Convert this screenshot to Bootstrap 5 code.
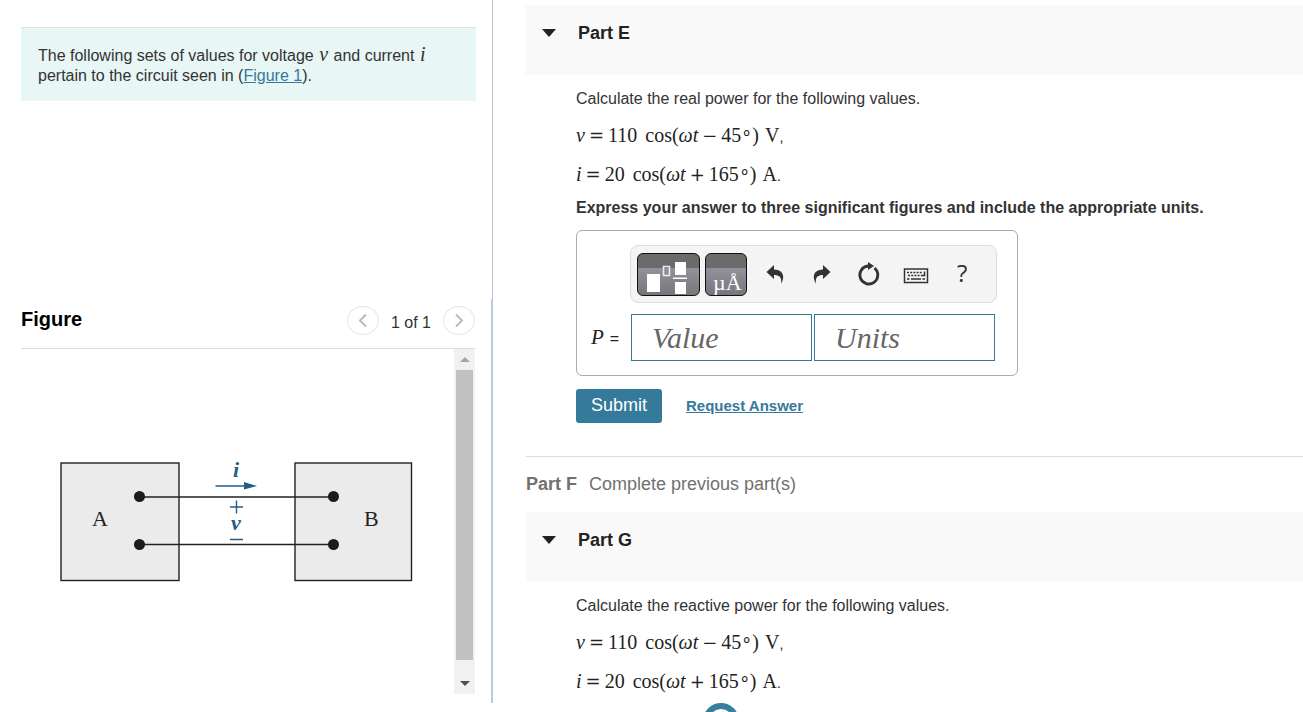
<!DOCTYPE html>
<html lang="en">
<head>
<meta charset="utf-8">
<meta name="viewport" content="width=device-width, initial-scale=1">
<title>Circuit power: Parts E to G</title>
<link href="https://cdn.jsdelivr.net/npm/bootstrap@5.3.0/dist/css/bootstrap.min.css" rel="stylesheet">
<style>
body { font-family: "Liberation Sans", Arial, sans-serif; font-size: 16px; line-height: 20px; color: #333; }
a { color: #357a9b; }
.workspace { display: grid; grid-template-columns: minmax(0, 493fr) minmax(0, 810fr); }
.side-pane { padding-bottom: 9px; }
.intro-wrap { flex: 0 0 299px; border-right: 1px solid #b9c9dc; padding: 27px 16px 0 21px; }
.intro { background: #e8f6f5; border-top: 1px solid #d6e4e2; padding: 18px 16px 15px 17px; }
.figure-wrap { border-right: 2px solid #b9c9dc; padding: 0 16px 9px 21px; min-height: 0; }
.figure-head { height: 50px; border-bottom: 1px solid #ddd; padding-bottom: 6px; }
.figure-head h2 { font-size: 20px; line-height: 24px; color: #000; padding-bottom: 4px; }
.pager { width: 32px; height: 29px; border: 1px solid #e6e6e6; border-radius: 50%; background: #fff; color: #bbb; }
.view { min-height: 0; }
.drawing { padding: 106px 0 0 34px; }
.scroll-track { width: 21px; background: #f1f1f1; }
.scroll-track div { background: #c1c1c1; margin: 0 2px; }
.scroll-end { height: 21px; }
.scroll-start { height: 34px; }
.main-pane { padding: 5px 0 0 33px; }
.part-head { background: #f9f9f9; height: 70px; padding: 17px 16px; }
.part-head button { color: #222; gap: 22px; font-size: 18px; line-height: 22px; }
.part-body { padding: 14px 0 0 50px; }
.intro i, .eq, .var-p { font-family: "Liberation Serif", "Times New Roman", serif; }
.intro i { font-size: 20px; line-height: 16px; margin: 0 1px; }
.eq { font-size: 20px; line-height: 26px; margin: 13px 0 0; color: #222; }
.eq .op { font-family: "DejaVu Serif", serif; font-size: 18px; line-height: 16px; margin: 0 4px; }
.eq .unit { margin-left: 6px; }
.eq .fn { margin-left: 8px; }
.eq sup { font-size: 18px; top: -4px; line-height: 0; }
.eq .end { font-family: "Liberation Sans", sans-serif; font-size: 14px; line-height: 16px; }
.directions { margin: 11px 0 12px; }
.answer { max-width: 442px; border: 1px solid #aaa; border-radius: 6px; padding: 14px 20px 14px 14px; margin-bottom: 13px; }
.tools { margin-left: 39px; height: 58px; border: 1px solid #ddd; border-radius: 8px; background: #f4f4f4; padding: 0 14px 0 6px; }
.tile { height: 43px; border: 1px solid #111; border-radius: 6px; background: linear-gradient(#6b6b6b 0 34%, #93919b 34%, #77767c); }
.tile-wide { width: 63px; }
.tile-slim { width: 42px; margin-left: 5px; }
.tool { width: 47px; height: 36px; }
.entry { margin-top: 11px; padding-right: 2px; }
.entry-fields { gap: 2px; }
.var-p { width: 40px; color: #222; font-size: 21px; }
.var-p span { font-family: "Liberation Sans", sans-serif; font-size: 16px; margin-left: 6px; }
.field { height: 47px; border: 1px solid #357a9b; border-radius: 0; padding: 0 20px; font: italic 30px "Liberation Serif", "Times New Roman", serif; }
.field::placeholder { color: #666; opacity: 1; }
.submit { background: #357a9b; color: #fff; font-size: 18px; line-height: 22px; padding: 5px 15px 7px; border: 0; border-radius: 3px; }
.request { font-size: 15px; }
.part-locked { border-top: 1px solid #ddd; margin-top: 33px; height: 56px; padding-top: 16px; gap: 12px; color: #707070; font-size: 18px; line-height: 22px; }
.loading { width: 36px; height: 36px; border: 6px solid #357f9f; border-radius: 50%; margin: 9px 0 0 127px; }
</style>
</head>
<body>
<div class="workspace vh-100 overflow-hidden">
  <aside class="side-pane d-flex flex-column vh-100">
    <div class="intro-wrap">
      <div class="intro">The following sets of values for voltage <i>v</i> and current <i>i</i> pertain to the circuit seen in (<a href="#figure">Figure 1</a>).</div>
    </div>
    <section class="figure-wrap d-flex flex-column flex-grow-1" id="figure">
      <div class="figure-head d-flex align-items-center justify-content-between">
        <h2 class="fw-bold m-0">Figure</h2>
        <div class="d-flex align-items-center">
          <button type="button" class="pager p-0 d-flex align-items-center justify-content-center" aria-label="Previous figure"><svg width="10" height="15" viewBox="0 0 10 15" fill="none" stroke="currentColor" stroke-width="2"><path d="M8 1.5 2 7.5l6 6"/></svg></button>
          <span class="px-2 mx-1 pt-1">1 of 1</span>
          <button type="button" class="pager p-0 d-flex align-items-center justify-content-center" aria-label="Next figure"><svg width="10" height="15" viewBox="0 0 10 15" fill="none" stroke="currentColor" stroke-width="2"><path d="m2 1.5 6 6-6 6"/></svg></button>
        </div>
      </div>
      <div class="view d-flex flex-grow-1">
        <div class="drawing flex-grow-1">
          <svg width="365" height="134" viewBox="55 455 365 134" font-family="Liberation Serif, serif" role="img" aria-label="Two circuits A and B joined by two wires">
            <g fill="#ebebeb" stroke="#222" stroke-width="1.4"><rect x="61" y="463" width="118" height="117.500"/><rect x="295" y="463" width="116.500" height="117.500"/></g>
            <path d="M139 497h194M139 544.500h194" stroke="#222" stroke-width="1.4"/>
            <g fill="#1b1b1b"><circle cx="139.500" cy="496.500" r="5.500"/><circle cx="139.500" cy="544.500" r="5.500"/><circle cx="333.500" cy="496.500" r="5.500"/><circle cx="333.500" cy="544.500" r="5.500"/></g>
            <g font-size="22" fill="#222"><text x="92" y="526">A</text><text x="364" y="526">B</text></g>
            <path d="M215.500 486H246M230 507h13M236.500 500.500v13M230 539.500h13" stroke="#1f5f86" stroke-width="1.4"/>
            <path d="m244 482 13 4-13 3.500z" fill="#1f5f86"/>
            <g font-size="22" font-style="italic" font-weight="bold" fill="#1f5f86"><text x="233" y="477">i</text><text x="231" y="530">v</text></g>
          </svg>
        </div>
        <div class="scroll-track d-flex flex-column" aria-hidden="true">
          <span class="scroll-end d-flex align-items-center justify-content-center"><svg width="10" height="5"><path d="M0 5 5 0l5 5z" fill="#a3a3a3"/></svg></span>
          <div class="flex-grow-1"></div>
          <span class="scroll-start d-flex align-items-end justify-content-center pb-2"><svg width="10" height="5"><path d="m0 0 5 5 5-5z" fill="#505050"/></svg></span>
        </div>
      </div>
    </section>
  </aside>

  <main class="main-pane">
    <section>
      <div class="part-head"><button type="button" class="btn p-0 border-0 fw-bold d-flex align-items-center"><svg width="14" height="8"><path d="M0 0h14L7 8z" fill="#222"/></svg>Part E</button></div>
      <div class="part-body">
        <p class="m-0">Calculate the real power for the following values.</p>
        <p class="eq"><i>v</i><span class="op">=</span>110<span class="fn">cos(</span><i>ωt</i><span class="op">−</span>45<sup>∘</sup>)<span class="unit">V</span><span class="end">,</span></p>
        <p class="eq"><i>i</i><span class="op">=</span>20<span class="fn">cos(</span><i>ωt</i><span class="op">+</span>165<sup>∘</sup>)<span class="unit">A</span><span class="end">.</span></p>
        <p class="directions fw-bold">Express your answer to three significant figures and include the appropriate units.</p>
        <div class="answer">
          <div class="tools d-flex align-items-center">
            <button type="button" class="tile tile-wide p-0" aria-label="Templates"><svg class="d-block" width="61" height="41" viewBox="638 253 61 41"><path d="M647 273h13v18h-13zM675 261h11v13h-11zM675 281h11v12h-11zM673 276.500h14v1.500h-14z" fill="#fff"/><path d="M663.500 265.500h6v9h-6z" fill="none" stroke="#eee" stroke-width="1.500"/></svg></button>
            <button type="button" class="tile tile-slim p-0" aria-label="Symbols"><svg class="d-block" width="40" height="41" viewBox="706 253 40 41"><text x="713" y="289" font-family="Liberation Serif, serif" font-size="22" fill="#fff">µÅ</text></svg></button>
            <div class="d-flex flex-grow-1 justify-content-between ps-1">
            <button type="button" class="btn tool p-0 border-0" aria-label="Undo"><svg width="20" height="22" viewBox="0 0 20 22" fill="#333"><path d="M1.500 8 9 1v4.500c8 0 12 6 7 14.500 1-6-1-9-7-9V15z"/></svg></button>
            <button type="button" class="btn tool p-0 border-0" aria-label="Redo"><svg width="20" height="22" viewBox="0 0 20 22" fill="#333"><path d="M18.500 8 11 1v4.500c-8 0-12 6-7 14.500-1-6 1-9 7-9V15z"/></svg></button>
            <button type="button" class="btn tool p-0 border-0" aria-label="Reset"><svg width="24" height="26" viewBox="0 0 24 26" fill="none"><path d="M17.500 7A9 9 0 1 1 11 5" stroke="#333" stroke-width="2.800"/><path d="M11 1v8l6-4z" fill="#333"/></svg></button>
            <button type="button" class="btn tool p-0 border-0" aria-label="Keyboard shortcuts"><svg width="26" height="24" viewBox="0 0 26 24" fill="none" stroke="#333"><rect x="1.500" y="7" width="23" height="13.500" stroke-width="1.500"/><path d="M4 10.500h16M5 13.500h13" stroke-width="1.500" stroke-dasharray="2 1.200"/><path d="M21.500 9.500v4H18M4 17h2.500M8 17h10M19.500 17h2.500" stroke-width="1.500"/></svg></button>
            <button type="button" class="btn tool p-0 border-0" aria-label="Help"><svg width="24" height="36" viewBox="0 0 24 36"><text x="6" y="26" font-family="Open Sans, sans-serif" font-size="24" fill="#333">?</text></svg></button>
            </div>
          </div>
          <div class="entry d-flex align-items-center">
            <label class="var-p flex-shrink-0" for="value"><i>P</i><span>=</span></label>
            <div class="entry-fields d-flex flex-grow-1">
              <input class="field w-50" id="value" type="text" placeholder="Value">
              <input class="field w-50" type="text" aria-label="Units" placeholder="Units">
            </div>
          </div>
        </div>
        <div class="d-flex align-items-center">
          <button type="submit" class="submit">Submit</button>
          <a class="request fw-bold ms-4" href="#request">Request Answer</a>
        </div>
      </div>
    </section>

    <section class="part-locked d-flex"><strong>Part F</strong><span>Complete previous part(s)</span></section>

    <section>
      <div class="part-head"><button type="button" class="btn p-0 border-0 fw-bold d-flex align-items-center"><svg width="14" height="8"><path d="M0 0h14L7 8z" fill="#222"/></svg>Part G</button></div>
      <div class="part-body">
        <p class="m-0">Calculate the reactive power for the following values.</p>
        <p class="eq"><i>v</i><span class="op">=</span>110<span class="fn">cos(</span><i>ωt</i><span class="op">−</span>45<sup>∘</sup>)<span class="unit">V</span><span class="end">,</span></p>
        <p class="eq"><i>i</i><span class="op">=</span>20<span class="fn">cos(</span><i>ωt</i><span class="op">+</span>165<sup>∘</sup>)<span class="unit">A</span><span class="end">.</span></p>
        <div class="loading" role="status" aria-label="Loading"></div>
      </div>
    </section>
  </main>
</div>
<script src="https://cdn.jsdelivr.net/npm/bootstrap@5.3.0/dist/js/bootstrap.bundle.min.js"></script>
</body>
</html>
